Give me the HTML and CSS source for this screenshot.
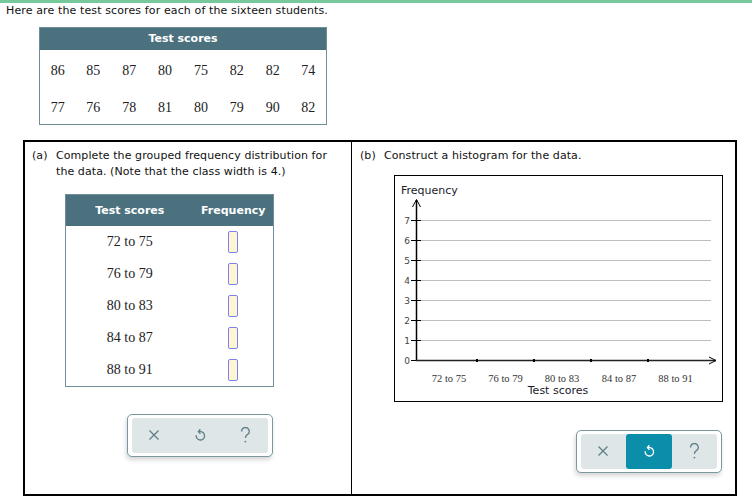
FILE: index.html
```html
<!DOCTYPE html>
<html>
<head>
<meta charset="utf-8">
<link rel="stylesheet" href="styles.css">
</head>
<body>
<div class="topbar"></div>
<p class="intro">Here are the test scores for each of the sixteen students.</p>
<table class="scores">
  <thead><tr><th colspan="8">Test scores</th></tr></thead>
  <tbody>
    <tr><td>86</td><td>85</td><td>87</td><td>80</td><td>75</td><td>82</td><td>82</td><td>74</td></tr>
    <tr><td>77</td><td>76</td><td>78</td><td>81</td><td>80</td><td>79</td><td>90</td><td>82</td></tr>
  </tbody>
</table>

<div class="panel">
  <div class="col col-a">
    <div class="q"><span class="qlabel">(a)</span><span class="qtext">Complete the grouped frequency distribution for the data. (Note that the class width is 4.)</span></div>
    <table class="freq">
      <thead><tr><th class="c1">Test scores</th><th class="c2">Frequency</th></tr></thead>
      <tbody>
        <tr><td>72 to 75</td><td><span class="inp"></span></td></tr>
        <tr><td>76 to 79</td><td><span class="inp"></span></td></tr>
        <tr><td>80 to 83</td><td><span class="inp"></span></td></tr>
        <tr><td>84 to 87</td><td><span class="inp"></span></td></tr>
        <tr><td>88 to 91</td><td><span class="inp"></span></td></tr>
      </tbody>
    </table>
    <div class="tools-wrap wrap-a">
      <div class="tools">
        <div class="tools-inner">
          <div class="tbtn"><svg width="12" height="12" viewBox="0 0 12 12"><path d="M1.5 1.5 L10.5 10.5 M10.5 1.5 L1.5 10.5" stroke="#5f7f89" stroke-width="1.3" fill="none"/></svg></div>
          <div class="tbtn"><svg width="12" height="14" viewBox="0 0 12 14"><path d="M4.6 3.6 L6.2 3.6 A4.2 4.2 0 1 1 2.2 7.2" stroke="#5f7f89" stroke-width="1.3" fill="none"/><path d="M6.4 1.3 L4.4 3.6 L6.4 5.9" stroke="#5f7f89" stroke-width="1.3" fill="none"/></svg></div>
          <div class="tbtn"><svg width="11" height="17" viewBox="0 0 11 17"><path d="M1.6 4.5 A3.8 3.8 0 1 1 7.3 7.6 Q5.4 8.8 5.4 11" stroke="#5f7f89" stroke-width="1.3" fill="none"/><circle cx="5.4" cy="14.6" r="0.9" fill="#5f7f89"/></svg></div>
        </div>
      </div>
    </div>
  </div>
  <div class="col col-b">
    <div class="q"><span class="qlabel">(b)</span><span class="qtext">Construct a histogram for the data.</span></div>
    <div class="graph">
      <svg width="327" height="225" viewBox="395 175 327 225">
        <text x="401" y="193" class="glabel">Frequency</text>
        <g stroke="#bdbdbd" stroke-width="1">
          <line x1="416" y1="219.5" x2="711" y2="219.5"/>
          <line x1="416" y1="239.5" x2="711" y2="239.5"/>
          <line x1="416" y1="259.5" x2="711" y2="259.5"/>
          <line x1="416" y1="279.5" x2="711" y2="279.5"/>
          <line x1="416" y1="299.5" x2="711" y2="299.5"/>
          <line x1="416" y1="319.5" x2="711" y2="319.5"/>
          <line x1="416" y1="339.5" x2="711" y2="339.5"/>
        </g>
        <g stroke="#000" stroke-width="1">
          <line x1="411" y1="219.5" x2="421" y2="219.5"/>
          <line x1="411" y1="239.5" x2="421" y2="239.5"/>
          <line x1="411" y1="259.5" x2="421" y2="259.5"/>
          <line x1="411" y1="279.5" x2="421" y2="279.5"/>
          <line x1="411" y1="299.5" x2="421" y2="299.5"/>
          <line x1="411" y1="319.5" x2="421" y2="319.5"/>
          <line x1="411" y1="339.5" x2="421" y2="339.5"/>
          <line x1="411" y1="359.5" x2="421" y2="359.5"/>
        </g>
        <line x1="416.5" y1="199" x2="416.5" y2="360" stroke="#000" stroke-width="1.5"/>
        <polyline points="412.5,206 416.5,198.5 420.5,206" stroke="#000" stroke-width="1" fill="none"/>
        <line x1="416" y1="359.5" x2="716" y2="359.5" stroke="#222" stroke-width="1.5"/>
        <polyline points="709,356 716,359.5 709,363" stroke="#000" stroke-width="1" fill="none"/>
        <g fill="#000">
          <rect x="476" y="358" width="2" height="3"/>
          <rect x="533" y="358" width="2" height="3"/>
          <rect x="590" y="358" width="2" height="3"/>
          <rect x="647" y="358" width="2" height="3"/>
        </g>
        <g class="ylab" text-anchor="end">
          <text x="410" y="222.5">7</text>
          <text x="410" y="242.5">6</text>
          <text x="410" y="262.5">5</text>
          <text x="410" y="282.5">4</text>
          <text x="410" y="302.5">3</text>
          <text x="410" y="322.5">2</text>
          <text x="410" y="342.5">1</text>
          <text x="410" y="362.5">0</text>
        </g>
        <g class="xlab" text-anchor="middle">
          <text x="449" y="381">72 to 75</text>
          <text x="505.5" y="381">76 to 79</text>
          <text x="562" y="381">80 to 83</text>
          <text x="619" y="381">84 to 87</text>
          <text x="675.5" y="381">88 to 91</text>
        </g>
        <text x="558" y="393" text-anchor="middle" class="glabel">Test scores</text>
      </svg>
    </div>
    <div class="tools-wrap wrap-b">
      <div class="tools">
        <div class="tools-inner">
          <div class="tbtn"><svg width="12" height="12" viewBox="0 0 12 12"><path d="M1.5 1.5 L10.5 10.5 M10.5 1.5 L1.5 10.5" stroke="#5f7f89" stroke-width="1.3" fill="none"/></svg></div>
          <div class="tbtn active"><svg width="12" height="14" viewBox="0 0 12 14"><path d="M4.6 3.6 L6.2 3.6 A4.2 4.2 0 1 1 2.2 7.2" stroke="#ffffff" stroke-width="1.3" fill="none"/><path d="M6.4 1.3 L4.4 3.6 L6.4 5.9" stroke="#ffffff" stroke-width="1.3" fill="none"/></svg></div>
          <div class="tbtn"><svg width="11" height="17" viewBox="0 0 11 17"><path d="M1.6 4.5 A3.8 3.8 0 1 1 7.3 7.6 Q5.4 8.8 5.4 11" stroke="#5f7f89" stroke-width="1.3" fill="none"/><circle cx="5.4" cy="14.6" r="0.9" fill="#5f7f89"/></svg></div>
        </div>
      </div>
    </div>
  </div>
</div>
</body>
</html>
```

FILE: styles.css
```css
* { box-sizing: border-box; }
html, body { margin: 0; padding: 0; background: #fff; }
body {
  font-family: "DejaVu Sans", Verdana, sans-serif;
  font-size: 11px;
  color: #111;
  width: 752px;
}
.topbar { height: 3px; background: #77c89a; }
.intro {
  margin: 0;
  padding: 1px 0 0 6px;
  line-height: 13px;
  letter-spacing: 0.12px;
}
.scores {
  margin: 10px 0 0 39px;
  width: 288px;
  border-collapse: collapse;
  border: 1px solid #6f8e97;
  table-layout: fixed;
}
.scores th {
  background: #4b717e;
  color: #fff;
  font-weight: bold;
  height: 22px;
  padding: 0;
  text-align: center;
  font-size: 11px;
}
.scores td {
  width: 36px;
  padding: 13px 0 8px;
  line-height: 16px;
  text-align: center;
  font-family: "Liberation Serif", "Times New Roman", serif;
  font-size: 14px;
  color: #222;
}
.panel {
  margin: 15px 0 0 23px;
  width: 714px;
  height: 356px;
  border: 2px solid #000;
  display: flex;
}
.col-a {
  width: 327px;
  border-right: 1px solid #000;
  padding: 6px 0 0 7px;
}
.col-b {
  flex: 1;
  padding: 6px 0 0 8px;
}
.q {
  display: flex;
  line-height: 16px;
  color: #111;
  letter-spacing: 0.08px;
}
.qlabel { width: 24px; flex: none; }
.col-a .qtext { width: 280px; }
.freq {
  margin: 14px 0 0 33px;
  width: 208px;
  border-collapse: collapse;
  border: 1px solid #6f8e97;
  table-layout: fixed;
}
.freq th {
  background: #4b717e;
  color: #fff;
  font-weight: bold;
  height: 32px;
  padding: 0;
  font-size: 11px;
  text-align: center;
}
.freq th.c1 { width: 128px; }
.freq th.c2 { width: 80px; }
.freq td {
  height: 32px;
  padding: 0;
  text-align: center;
  vertical-align: middle;
  font-family: "Liberation Serif", "Times New Roman", serif;
  font-size: 14px;
  color: #222;
}
.inp {
  display: inline-block;
  width: 10px;
  height: 22px;
  border: 1px solid #7f7ff0;
  border-radius: 2px;
  background: #fdf6d4;
  vertical-align: middle;
}
.tools-wrap {
  display: flex;
  justify-content: flex-end;
}
.wrap-a { width: 208px; margin: 27px 0 0 33px; }
.wrap-b { width: 328px; margin: 28px 0 0 34px; }
.tools {
  border: 1px solid #7b98a1;
  border-radius: 5px;
  padding: 3px 4px;
  background: #fff;
  box-shadow: -1px 3px 4px rgba(0, 0, 0, 0.16);
}
.tools-inner {
  display: flex;
  background: #dfe6e8;
  border-radius: 3px;
}
.tbtn {
  width: 45.5px;
  height: 35px;
  display: flex;
  align-items: center;
  justify-content: center;
}
.tbtn.active {
  background: #0b8ea9;
  border-radius: 3px;
}
.graph {
  margin: 11px 0 0 34px;
  width: 329px;
  height: 227px;
  border: 1px solid #000;
}
.graph svg { display: block; }
.glabel {
  font-family: "DejaVu Sans", Verdana, sans-serif;
  font-size: 11px;
  fill: #1a1a2a;
}
.ylab text {
  font-family: "DejaVu Sans", Verdana, sans-serif;
  font-size: 9px;
  fill: #444;
}
.xlab text {
  font-family: "Liberation Serif", "Times New Roman", serif;
  font-size: 10.5px;
  fill: #333;
}
```
